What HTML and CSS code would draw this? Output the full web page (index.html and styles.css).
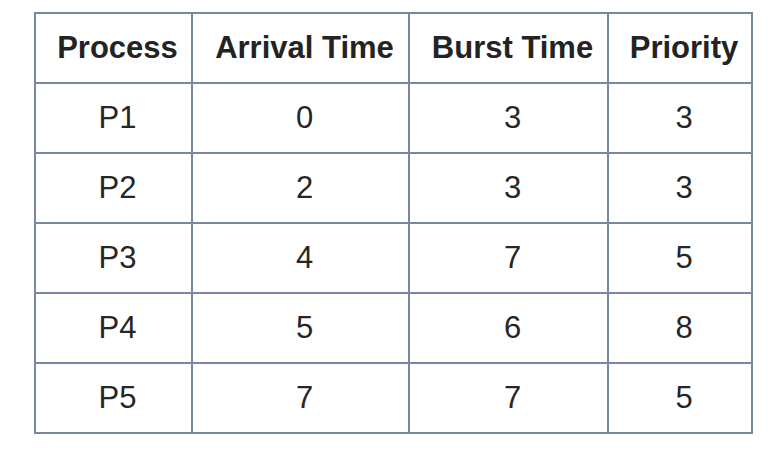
FILE: index.html
```html
<!DOCTYPE html>
<html>
<head>
<meta charset="utf-8">
<link rel="stylesheet" href="styles.css">
</head>
<body>
<table class="sched">
  <colgroup>
    <col class="c1"><col class="c2"><col class="c3"><col class="c4">
  </colgroup>
  <thead>
    <tr><th>Process</th><th>Arrival Time</th><th>Burst Time</th><th>Priority</th></tr>
  </thead>
  <tbody>
    <tr><td>P1</td><td>0</td><td>3</td><td>3</td></tr>
    <tr><td>P2</td><td>2</td><td>3</td><td>3</td></tr>
    <tr><td>P3</td><td>4</td><td>7</td><td>5</td></tr>
    <tr><td>P4</td><td>5</td><td>6</td><td>8</td></tr>
    <tr><td>P5</td><td>7</td><td>7</td><td>5</td></tr>
  </tbody>
</table>
</body>
</html>
```

FILE: styles.css
```css
html, body {
  margin: 0;
  padding: 0;
  background: #ffffff;
}
body {
  padding: 12px 0 0 34px;
  font-family: "Liberation Sans", Arial, sans-serif;
  color: #262626;
}
.sched {
  border-collapse: collapse;
  table-layout: fixed;
  width: 717px;
}
.c1 { width: 157px; }
.c2 { width: 217px; }
.c3 { width: 199px; }
.c4 { width: 144px; }
.sched th,
.sched td {
  border: 2px solid #7a86a3;
  height: 68px;
  padding: 0 4px 0 12px;
  text-align: center;
  vertical-align: middle;
  font-size: 31px;
  line-height: 36px;
  white-space: nowrap;
}
.sched th {
  font-weight: bold;
  color: #232323;
}
.sched td {
  font-weight: normal;
}
```
